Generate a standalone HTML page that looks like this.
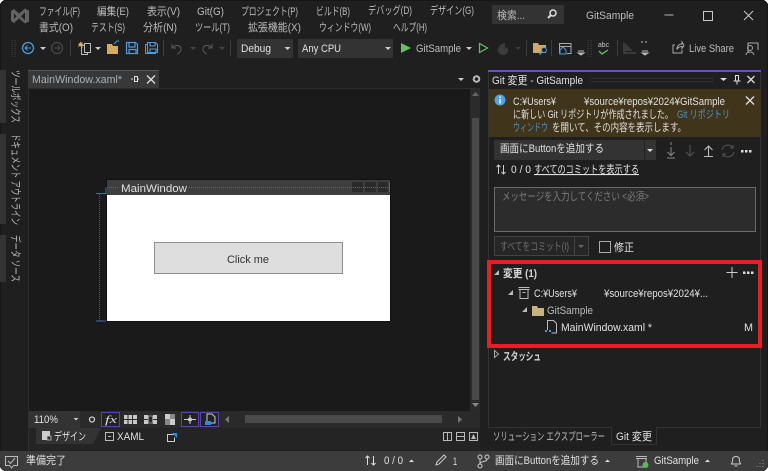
<!DOCTYPE html>
<html lang="ja"><head><meta charset="utf-8"><title>GitSample</title>
<style>
html,body{margin:0;padding:0;background:#fff;width:768px;height:471px;overflow:hidden}
svg{display:block}
text{font-family:"Liberation Sans","Noto Sans CJK JP",sans-serif;font-size:11px;fill:#c4c4c4}
.m{fill:#bcbcbc}
.d{fill:#6e6e6e}
.w{fill:#e0e0e0}
.l{fill:#4d93c9}
.b{font-weight:bold;fill:#d6d6d6}
.i{fill:none;stroke:#c8c8c8;stroke-width:1}
.g{fill:none;stroke:#5a5a5a;stroke-width:1}
</style></head><body>
<svg width="768" height="471" viewBox="0 0 768 471" xmlns="http://www.w3.org/2000/svg">
<rect x="0" y="0" width="768" height="471" rx="7" fill="#1f1f1f" stroke="#0c0c0c"/>
<!-- logo -->
<path d="M11 11l3-2 5 4.500 6-5 4 2v11l-4 2-6-5-5 4.500-3-2zM14 13.500v5.500l2.500-2.700zM25 12.500l-4 3.800 4 3.800z" fill="#626262" fill-rule="evenodd"/>
<!-- menu -->
<text class="m" x="39" y="15" textLength="41" lengthAdjust="spacingAndGlyphs">ファイル(F)</text>
<text class="m" x="97" y="15" textLength="32" lengthAdjust="spacingAndGlyphs">編集(E)</text>
<text class="m" x="147" y="15" textLength="33" lengthAdjust="spacingAndGlyphs">表示(V)</text>
<text class="m" x="197" y="15" textLength="27" lengthAdjust="spacingAndGlyphs">Git(G)</text>
<text class="m" x="241" y="15" textLength="57" lengthAdjust="spacingAndGlyphs">プロジェクト(P)</text>
<text class="m" x="316" y="15" textLength="34" lengthAdjust="spacingAndGlyphs">ビルド(B)</text>
<text class="m" x="368" y="14" textLength="44" lengthAdjust="spacingAndGlyphs">デバッグ(D)</text>
<text class="m" x="430" y="14" textLength="44" lengthAdjust="spacingAndGlyphs">デザイン(G)</text>
<text class="m" x="39" y="31" textLength="34" lengthAdjust="spacingAndGlyphs">書式(O)</text>
<text class="m" x="91" y="31" textLength="34" lengthAdjust="spacingAndGlyphs">テスト(S)</text>
<text class="m" x="143" y="31" textLength="34" lengthAdjust="spacingAndGlyphs">分析(N)</text>
<text class="m" x="195" y="31" textLength="35" lengthAdjust="spacingAndGlyphs">ツール(T)</text>
<text class="m" x="248" y="31" textLength="53" lengthAdjust="spacingAndGlyphs">拡張機能(X)</text>
<text class="m" x="319" y="31" textLength="52" lengthAdjust="spacingAndGlyphs">ウィンドウ(W)</text>
<text class="m" x="393" y="31" textLength="34" lengthAdjust="spacingAndGlyphs">ヘルプ(H)</text>
<!-- search -->
<rect x="492" y="5" width="72" height="19" fill="#333"/>
<text class="m" x="497" y="19" textLength="28" lengthAdjust="spacingAndGlyphs">検索...</text>
<circle cx="553" cy="13" r="3" fill="none" stroke="#ddd" stroke-width="1.500"/><path d="M551 15l-3 3" stroke="#ddd" stroke-width="2"/>
<text class="m" x="586" y="19" textLength="48" lengthAdjust="spacingAndGlyphs">GitSample</text>
<path d="M664.500 15h9" stroke="#b5b5b5"/>
<rect x="703.500" y="11.500" width="9" height="9" fill="none" stroke="#c8c8c8"/>
<path d="M744 11l9 9M753 11l-9 9" stroke="#c8c8c8"/>
<!-- toolbar -->
<path d="M12 40v18M15 40v18" stroke="#444" stroke-dasharray="1 1"/>
<circle cx="28" cy="48" r="5.500" fill="none" stroke="#4a9be0" stroke-width="1.300"/>
<path d="M31 48h-6M27.500 45.500L25 48l2.500 2.500" fill="none" stroke="#4a9be0"/>
<path d="M40 47h6l-3 3z" fill="#ccc"/>
<circle cx="57" cy="48" r="5.500" fill="none" stroke="#4a4a4a" stroke-width="1.200"/>
<path d="M54 48h6M57.500 45.500L60 48l-2.500 2.500" fill="none" stroke="#4a4a4a"/>
<path d="M70.500 40v16" stroke="#3d3d3d"/>
<rect x="81.500" y="45.500" width="6" height="9" fill="none" stroke="#bbb"/><rect x="84.500" y="43.500" width="6" height="9" fill="#1f1f1f" stroke="#bbb"/>
<path d="M80 41l1 2 2-1-1 2 2 1-2 1 1 2-3-2-2 1 1-2-1-1 2-1z" fill="#d5b36a"/>
<path d="M95 47h6l-3 3z" fill="#ccc"/>
<path d="M107 44h5l1 2h5v8h-11z" fill="#d4ac5e"/><path d="M114 44l3-3 2 0" fill="none" stroke="#4a9be0"/>
<path d="M126.500 42.500h9l2 2v9h-11zM129 43v4h6v-4M129 53v-3.500h7V53" fill="none" stroke="#4a9be0" stroke-width="1.200"/>
<path d="M148.500 44.500h-3v9h10v-2" fill="none" stroke="#4a9be0"/>
<path d="M147.500 42.500h8l2 2v8h-10zM150 43v3h5v-3M150 52v-3h6v3" fill="#1f1f1f" stroke="#4a9be0" stroke-width="1.100"/>
<path d="M163.500 40v16" stroke="#3d3d3d"/>
<path d="M172 44v4h4M172 48c3-4 9-3 9 1 0 2-1 4-4 5" class="g" stroke-width="1.300"/>
<path d="M190 47h6l-3 3z" fill="#444"/>
<path d="M212 44v4h-4M212 48c-3-4-9-3-9 1 0 2 1 4 4 5" class="g" stroke-width="1.300"/>
<path d="M219 47h6l-3 3z" fill="#444"/>
<path d="M230.500 40v16" stroke="#3d3d3d"/>
<rect x="237" y="39" width="56" height="19" fill="#333"/>
<text class="w" x="241" y="52" textLength="30" lengthAdjust="spacingAndGlyphs">Debug</text>
<path d="M284.500 47h6l-3 3z" fill="#ccc"/>
<rect x="298" y="39" width="95" height="19" fill="#333"/>
<text class="w" x="302" y="52" textLength="39" lengthAdjust="spacingAndGlyphs">Any CPU</text>
<path d="M385 47h6l-3 3z" fill="#ccc"/>
<path d="M401 43l10 5-10 5z" fill="#5fc45c"/>
<text class="m" x="416" y="52" textLength="45" lengthAdjust="spacingAndGlyphs">GitSample</text>
<path d="M466 47h6l-3 3z" fill="#ccc"/>
<path d="M479.500 43.500l8 4.500-8 4.500z" fill="none" stroke="#5fc45c" stroke-width="1.200"/>
<path d="M505 43c-6 1-7 5-7 7 0 3 2 5 5 5s5-2 5-5c0-1-1-2-1-3l-2 2c0-2 0-4 0-6z" fill="#3c3c3c"/>
<path d="M515 47h6l-3 3z" fill="#3e3e3e"/>
<path d="M526.500 40v16" stroke="#3d3d3d"/>
<path d="M533 43h5l1 2h7v8h-13z" fill="#d0a968"/><circle cx="544" cy="50" r="2.500" fill="#1f1f1f" stroke="#4a9be0"/><path d="M542 52l-2.500 2.500" stroke="#4a9be0" stroke-width="1.300"/>
<path d="M551.500 40v16" stroke="#3d3d3d"/>
<path d="M559.500 53.500v-10h11.500v10h-4M559.500 46.500H571" fill="none" stroke="#aaa"/><path d="M560 50l3-3 3 3v4h-6z" fill="none" stroke="#4a9be0"/>
<path d="M578 51h6M578 53l3 2 3-2z" stroke="#bbb" fill="#bbb"/>
<path d="M588 40v18M591 40v18" stroke="#444" stroke-dasharray="1 1"/>
<text x="598" y="47" textLength="11" lengthAdjust="spacingAndGlyphs" style="font-size:7px;fill:#ccc">abc</text>
<path d="M599 51l3 3 6-4" fill="none" stroke="#5fc45c" stroke-width="1.300"/>
<path d="M617.500 40v16" stroke="#3d3d3d"/>
<path d="M624 43v10h12" fill="none" stroke="#444" stroke-width="1.500"/><path d="M625 43l8 8h-8z" fill="#3a3a3a"/>
<path d="M642 41v2M646 41v2" stroke="#bbb"/>
<path d="M642 51h6M642 53l3 2 3-2z" stroke="#bbb" fill="#bbb"/>
<path d="M675 45h-2v8h9v-3M677 49c0-3 2-5 5-5v-2l2 3.500-2 3v-2c-2 0-4 1-5 3z" fill="none" stroke="#aaa"/>
<text class="m" x="689" y="52" textLength="45" lengthAdjust="spacingAndGlyphs">Live Share</text>
<path d="M748 53v-10h10v7M746 55c0-4 8-4 8 0" fill="none" stroke="#aaa"/><circle cx="750" cy="48" r="2.500" fill="none" stroke="#aaa"/>
<!-- left rail -->
<rect x="0" y="70" width="6" height="53" fill="#333"/>
<rect x="0" y="134" width="6" height="90" fill="#333"/>
<rect x="0" y="235" width="6" height="47" fill="#333"/>
<g transform="translate(12,70) rotate(90)"><text class="m" x="0" y="0" textLength="53" lengthAdjust="spacingAndGlyphs">ツールボックス</text></g>
<g transform="translate(12,134) rotate(90)"><text class="m" x="0" y="0" textLength="91" lengthAdjust="spacingAndGlyphs">ドキュメント アウトライン</text></g>
<g transform="translate(12,235) rotate(90)"><text class="m" x="0" y="0" textLength="47" lengthAdjust="spacingAndGlyphs">データ ソース</text></g>
<!-- document pane -->
<rect x="28" y="88" width="452" height="362" fill="#1a1a1a"/>
<path d="M28 88.500h452M28.500 88v362" stroke="#2e2e2e"/>
<rect x="28" y="70" width="131" height="18" fill="#383838"/><path d="M28 70.500h131" stroke="#555"/>
<text class="m" x="32" y="83" textLength="90" lengthAdjust="spacingAndGlyphs" style="fill:#a8b0b8">MainWindow.xaml*</text>
<path d="M131 79h2M134.500 76.500v5h3v-5zM139 79h-1" fill="none" stroke="#ddd"/>
<path d="M147 75.500l8 8M155 75.500l-8 8" stroke="#ddd" stroke-width="1.300"/>
<path d="M458 78h6l-3 3z" fill="#ccc"/>
<circle cx="476.500" cy="79" r="2.800" fill="none" stroke="#bbb" stroke-width="2"/>
<!-- designer -->
<rect x="106" y="179" width="285" height="143" fill="#111"/>
<rect x="107" y="180" width="283" height="15" fill="#3e3e3e"/>
<rect x="107" y="195" width="283" height="126" fill="#fff"/>
<rect x="352" y="182" width="11" height="10" fill="#2a2a2a"/><rect x="365" y="182" width="11" height="10" fill="#2a2a2a"/><rect x="378" y="182" width="10" height="10" fill="#2a2a2a"/>
<path d="M107 187.500h283" stroke="#4a6a9a" stroke-dasharray="1 1"/>
<path d="M389.500 182v10" stroke="#3f6cb0"/>
<rect x="119" y="184" width="70" height="10" fill="#3e3e3e"/>
<text class="w" x="121" y="192" textLength="66" lengthAdjust="spacingAndGlyphs">MainWindow</text>
<path d="M99.500 194v127" stroke="#3f5f95" stroke-dasharray="1 1"/>
<path d="M96 193.500h10v-6M96 321h10" fill="none" stroke="#3f6cb0"/>
<rect x="154.500" y="242.500" width="188" height="31" fill="#dedede" stroke="#8f8f8f"/>
<text x="227" y="263" textLength="42" lengthAdjust="spacingAndGlyphs" style="fill:#333">Click me</text>
<!-- v scroll -->
<rect x="470" y="89" width="10" height="322" fill="#2b2b2b"/>
<rect x="472" y="118" width="7" height="282" fill="#4a4a4a"/>
<path d="M472 403h7l-3.500 4z" fill="#888"/>
<path d="M472 96l3.500-4 3.500 4z" fill="#666"/>
<!-- zoom bar -->
<rect x="29" y="411" width="451" height="17" fill="#2a2a2a"/>
<rect x="29" y="411" width="51" height="17" fill="#333"/>
<text class="w" x="34" y="423" textLength="24" lengthAdjust="spacingAndGlyphs">110%</text>
<path d="M73.500 418h5l-2.500 2.500z" fill="#ccc"/>
<circle cx="92" cy="419.500" r="2.500" fill="none" stroke="#ccc" stroke-width="1.300"/>
<rect x="101.500" y="412.500" width="18" height="14" fill="#222" stroke="#5a45b0"/>
<text x="105" y="423" textLength="12" lengthAdjust="spacingAndGlyphs" style="font-family:'Liberation Serif',serif;font-style:italic;fill:#ddd;font-size:11px">fx</text>
<path d="M124 415h3.500v4H124zM128.500 415h3.500v4h-3.500zM133 415h4v4h-4zM124 420h3.500v4H124zM128.500 420h3.500v4h-3.500zM133 420h4v4h-4z" fill="#c8c8c8"/>
<path d="M144 415h4v4h-4zM153 415h4v4h-4zM144 420h4v4h-4zM153 420h4v4h-4z" fill="#c8c8c8"/><rect x="148.500" y="416" width="4" height="7" fill="none" stroke="#888"/>
<rect x="165" y="414" width="10" height="11" fill="#888"/><path d="M165 414h5v5h-5zM170 419h5v6h-5z" fill="#ccc"/>
<rect x="181.500" y="412.500" width="17" height="14" fill="#222" stroke="#5a45b0"/>
<path d="M184 419.500h12M190 415v9" stroke="#ccc"/><circle cx="190" cy="419.500" r="2" fill="#ccc"/>
<rect x="200.500" y="412.500" width="18" height="14" fill="#222" stroke="#5a45b0"/>
<path d="M207 414h5l3 3v6h-8z" fill="none" stroke="#ccc"/><rect x="205" y="421" width="6" height="4" fill="#1e90e0"/>
<path d="M229 416v7l-4-3.500z" fill="#777"/>
<rect x="245" y="415" width="197" height="8" fill="#4a4a4a"/>
<path d="M458 416v7l4-3.500z" fill="#777"/>
<!-- view tabs -->
<rect x="29" y="428" width="451" height="22" fill="#242424"/>
<path d="M36 428h65l-8 16H36z" fill="#333"/>
<rect x="42" y="431" width="8" height="9" fill="#ccc"/><rect x="47" y="436" width="4" height="4" fill="#333" stroke="#ccc" stroke-width=".7"/>
<text class="w" x="54" y="440" textLength="32" lengthAdjust="spacingAndGlyphs">デザイン</text>
<rect x="105.500" y="432.500" width="8" height="8" fill="none" stroke="#bbb"/><path d="M108 436.500h3" stroke="#bbb"/>
<text class="w" x="117" y="440" textLength="27" lengthAdjust="spacingAndGlyphs">XAML</text>
<path d="M174 434.500h-6.500v7h7v-4" fill="none" stroke="#ccc"/><path d="M172 433h5v5z" fill="#1e90e0"/>
<rect x="443.500" y="432.500" width="8" height="8" fill="none" stroke="#bbb"/><path d="M447.500 433v7" stroke="#bbb"/>
<rect x="456.500" y="432.500" width="8" height="8" fill="none" stroke="#bbb"/><path d="M457 436.500h7" stroke="#bbb"/>
<rect x="469.500" y="432.500" width="8" height="8" fill="none" stroke="#bbb"/><path d="M471 439l2.500-5 2.500 5z" fill="#bbb"/>
<!-- git panel -->
<rect x="488.500" y="70.500" width="272" height="357" fill="#1f1f1f" stroke="#333"/>
<rect x="488" y="70" width="273" height="2" fill="#6a4fc8"/>
<text class="w" x="492" y="84" textLength="91" lengthAdjust="spacingAndGlyphs">Git 変更 - GitSample</text>
<path d="M590 78.500h124M590 81.500h124" stroke="#3a3a3a" stroke-dasharray="1 1"/>
<path d="M720 78h7l-3.500 3z" fill="#ddd"/>
<path d="M735 75.500h4M735.500 76v5h3v-5M733.500 81h7M737 81v3.500" fill="none" stroke="#ddd"/>
<path d="M747.500 76l7 7M754.500 76l-7 7" stroke="#ddd" stroke-width="1.300"/>
<rect x="489" y="89" width="272" height="48" fill="#40341a"/>
<circle cx="500" cy="100" r="5.500" fill="#4da3f0"/>
<rect x="499.300" y="99" width="1.500" height="4.500" fill="#fff"/><rect x="499.300" y="96.500" width="1.500" height="1.500" fill="#fff"/>
<text class="w" x="513" y="105" textLength="43" lengthAdjust="spacingAndGlyphs">C:¥Users¥</text>
<text class="w" x="584" y="105" textLength="141" lengthAdjust="spacingAndGlyphs">¥source¥repos¥2024¥GitSample</text>
<text class="w" x="513" y="118" textLength="160" lengthAdjust="spacingAndGlyphs">に新しい Git リポジトリが作成されました。</text>
<text class="l" x="677" y="118" textLength="53" lengthAdjust="spacingAndGlyphs">Git リポジトリ</text>
<text class="l" x="513" y="131" textLength="35" lengthAdjust="spacingAndGlyphs">ウィンドウ</text>
<text class="w" x="552" y="131" textLength="134" lengthAdjust="spacingAndGlyphs">を開いて、その内容を表示します。</text>
<path d="M746 96.500l8 8M754 96.500l-8 8" stroke="#ddd" stroke-width="1.400"/>
<rect x="494" y="140" width="162" height="20" fill="#333"/>
<path d="M644.500 140v20" stroke="#222"/>
<text class="w" x="500" y="152" textLength="104" lengthAdjust="spacingAndGlyphs">画面にButtonを追加する</text>
<path d="M647 149h6l-3 3z" fill="#ddd"/>
<path d="M671 142v3M671 147v8M667.500 152l3.500 3.500 3.500-3.500M667 158h8" fill="none" stroke="#888"/>
<path d="M690 145v11M686 152l4 4 4-4" fill="none" stroke="#555"/>
<path d="M708.500 146v10M704.500 150l4-4 4 4M704 156.500h9" fill="none" stroke="#bbb" stroke-width="1.100"/>
<path d="M722 150a6 6 0 0 1 11-2M734 152a6 6 0 0 1-11 2M733 145v3h-3M723 157v-3h3" fill="none" stroke="#555"/>
<path d="M741 150h2.500v2.500H741zM745 150h2.500v2.500H745zM749 150h2.500v2.500H749z" fill="#ddd"/>
<path d="M498.500 174v-9M496.500 167l2-2 2 2M503.500 165v9M501.500 172l2 2 2-2" fill="none" stroke="#ccc"/>
<text class="w" x="511" y="173" textLength="20" lengthAdjust="spacingAndGlyphs">0 / 0</text>
<text class="w" x="534" y="173" textLength="105" lengthAdjust="spacingAndGlyphs" text-decoration="underline">すべてのコミットを表示する</text>
<rect x="494.500" y="187.500" width="261" height="44" fill="#2c2c2c" stroke="#6b6b6b"/>
<text x="502" y="200" textLength="147" lengthAdjust="spacingAndGlyphs" style="fill:#7c7c7c">メッセージを入力してください &lt;必須&gt;</text>
<rect x="494.500" y="236.500" width="94" height="19" fill="#262626" stroke="#434343"/>
<path d="M574.500 237v18" stroke="#434343"/>
<text class="d" x="500" y="250" textLength="69" lengthAdjust="spacingAndGlyphs">すべてをコミット(I)</text>
<path d="M578 245h6l-3 3z" fill="#666"/>
<rect x="599.500" y="241.500" width="11" height="11" fill="none" stroke="#aaa"/>
<text class="w" x="614" y="251" textLength="20" lengthAdjust="spacingAndGlyphs">修正</text>
<!-- changes -->
<path d="M494 275l5-5v5z" fill="#bbb"/>
<text class="b" x="503" y="277" textLength="34" lengthAdjust="spacingAndGlyphs">変更 (1)</text>
<path d="M732 267v11M726.500 272.500h11" stroke="#ccc"/>
<path d="M743 271.500h2.500v2.500H743zM747 271.500h2.500v2.500H747zM751 271.500h2.500v2.500H751z" fill="#ddd"/>
<path d="M508 295l5-5v5z" fill="#bbb"/>
<path d="M518.500 287.500h11M520 290v8.500h8V290M518.500 289.500h11M522.500 292.500h3" fill="none" stroke="#bbb"/>
<text class="w" x="534" y="297" textLength="43" lengthAdjust="spacingAndGlyphs">C:¥Users¥</text>
<text class="w" x="604" y="297" textLength="104" lengthAdjust="spacingAndGlyphs">¥source¥repos¥2024¥...</text>
<path d="M522 312l5-5v5z" fill="#bbb"/>
<path d="M532 306h5l1 2h6v8h-12z" fill="#c9b27c"/>
<text class="m" x="547" y="314" textLength="46" lengthAdjust="spacingAndGlyphs">GitSample</text>
<path d="M547.500 330v-9.500h6l3 3v9.500h-5" fill="none" stroke="#bbb"/>
<rect x="545" y="330" width="2" height="2" fill="#4a9be0"/><rect x="549" y="330" width="2" height="2" fill="#4a9be0"/>
<text class="w" x="561" y="331" textLength="91" lengthAdjust="spacingAndGlyphs">MainWindow.xaml *</text>
<text class="w" x="744" y="331" textLength="9" lengthAdjust="spacingAndGlyphs">M</text>
<rect x="489" y="262" width="271" height="84" fill="none" stroke="#ed1c24" stroke-width="4"/>
<path d="M494.500 350.500l4 3.500-4 3.500z" fill="none" stroke="#aaa"/>
<text class="b" x="503" y="360" textLength="38" lengthAdjust="spacingAndGlyphs">スタッシュ</text>
<!-- panel tabs -->
<rect x="489" y="428" width="272" height="22" fill="#1f1f1f"/>
<text class="m" x="493" y="440" textLength="112" lengthAdjust="spacingAndGlyphs">ソリューション エクスプローラー</text>
<path d="M611.500 427v17.500h45V427" fill="#1f1f1f" stroke="#333"/>
<text class="w" x="616" y="440" textLength="36" lengthAdjust="spacingAndGlyphs">Git 変更</text>
<!-- status bar -->
<path d="M0 451h768v13a7 7 0 0 1-7 7H7a7 7 0 0 1-7-7z" fill="#3c3c3c"/>
<path d="M5.500 456.500h12v9h-4l-2 2.500-2-2.500h-4z" fill="none" stroke="#bbb"/><path d="M8 461l2.500 2.500L15 458" fill="none" stroke="#bbb"/>
<text class="w" x="26" y="464" textLength="40" lengthAdjust="spacingAndGlyphs">準備完了</text>
<path d="M367.500 465v-9M365.500 458l2 -2 2 2M373.500 456v9M371.500 463l2 2 2-2" fill="none" stroke="#ddd"/>
<text class="w" x="384" y="464" textLength="19" lengthAdjust="spacingAndGlyphs">0 / 0</text>
<path d="M409 462l2.500-2.500 2.500 2.500z" fill="#ddd"/>
<path d="M436 465l1-3 7-7 2 2-7 7z" fill="none" stroke="#ccc"/>
<text class="w" x="453" y="465" textLength="4" lengthAdjust="spacingAndGlyphs">1</text>
<circle cx="480" cy="457" r="2" fill="none" stroke="#ccc"/><circle cx="480" cy="466" r="2" fill="none" stroke="#ccc"/><circle cx="487" cy="457" r="2" fill="none" stroke="#ccc"/>
<path d="M480 459v5M487 459c0 3-5 2-7 4" fill="none" stroke="#ccc"/>
<text class="w" x="495" y="464" textLength="104" lengthAdjust="spacingAndGlyphs">画面にButtonを追加する</text>
<path d="M605 462l2.500-2.500 2.500 2.500z" fill="#ddd"/>
<path d="M636 456.500h11M638 459v8h8v-8M636 458.500h11" fill="none" stroke="#bbb"/>
<circle cx="645.500" cy="465" r="3" fill="#5cb85c"/>
<text class="w" x="654" y="464" textLength="45" lengthAdjust="spacingAndGlyphs">GitSample</text>
<path d="M705 462l2.500-2.500 2.500 2.500z" fill="#ddd"/>
<path d="M731 464c2-1 1-3 2-6 1-2 5-2 6 0 1 3 0 5 2 6zM734.500 466h3" fill="none" stroke="#ccc"/>
<path d="M763 460v1M760 463v1M763 463v1M757 466v1M760 466v1M763 466v1" stroke="#777" stroke-width="1.500"/>
</svg>
</body></html>
